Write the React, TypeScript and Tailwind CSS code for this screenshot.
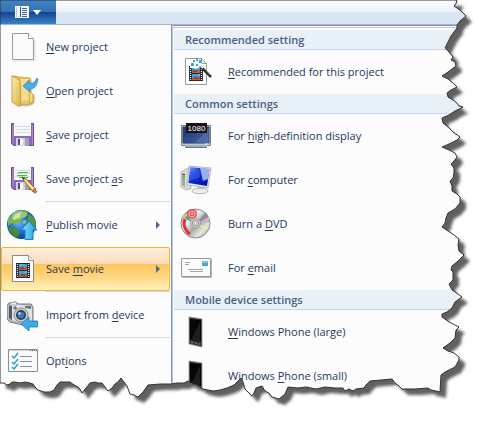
import React from "react";

const NewIcon = () => (
  <svg viewBox="0 0 32 32" className="h-8 w-8 shrink-0" aria-hidden="true">
    <path d="M6 30h22V9" fill="none" stroke="#dedede" />
    <path d="M5.500 2.500H21.500L26.500 8V28.500H5.500Z" fill="#fafafa" stroke="#999" />
    <path d="M21.500 2.500V7.500H26.500" fill="#fff" stroke="#999" />
  </svg>
);

const OpenIcon = () => (
  <svg viewBox="0 0 32 32" className="h-8 w-8 shrink-0" aria-hidden="true">
    <defs>
      <linearGradient id="folder" x1="0" y1="0" x2="1" y2="1">
        <stop offset="0" stopColor="#fbf0b4" />
        <stop offset="1" stopColor="#deb13f" />
      </linearGradient>
    </defs>
    <path d="M14 30L28 27L26 30L18 32Z" fill="#ccc" />
    <path d="M5 1L8 1L12 2L23 3L24 5V20L27 20V27L24 29L14 30Z" fill="#e7c45f" stroke="#bf9131" strokeWidth=".7" />
    <path d="M13 4H22V25L14 27Z" fill="#f3dc8b" />
    <path d="M5 1L13 5L14 31L11 31L5 27Z" fill="url(#folder)" stroke="#bf9131" strokeWidth=".8" />
    <path d="M22 18L24 17L26 20V27L23 28Z" fill="#f5dc72" stroke="#c79a35" strokeWidth=".7" />
    <path d="M16 11L22 5V8C26 9 28 7 30 3L31 4C30 11 27 14 23 14V17Z" fill="#49aee8" stroke="#1a83c5" strokeWidth=".7" />
  </svg>
);

const Floppy = () => (
  <>
    <path d="M4.500 4.500H26.500V26.500H7L4.500 24.500Z" fill="#8b68b8" stroke="#6b479b" />
    <path d="M6 6V24M25.500 6V26" stroke="#ac90cf" />
    <path d="M7 4H24V17H7Z" fill="#f8f8fa" />
    <path d="M8 7.500H23M8 10.500H23M8 13.500H23" stroke="#d3dce5" />
    <path d="M9 19H22V27H9Z" fill="#d5d2de" />
    <path d="M18 19H22V27H18Z" fill="#a69bb9" />
    <path d="M11 20H16V26H11Z" fill="#5f4391" />
    <path d="M13 20H16V26H13Z" fill="#fff" />
  </>
);

const SaveIcon = () => (
  <svg viewBox="0 0 32 32" className="h-8 w-8 shrink-0" aria-hidden="true">
    <Floppy />
  </svg>
);

const SaveAsIcon = () => (
  <svg viewBox="0 0 32 32" className="h-8 w-8 shrink-0" aria-hidden="true">
    <Floppy />
    <path d="M11 9.500H21M10 12.500H20M12 14.500H21" stroke="#46bd3b" />
    <path d="M15 14L19 16L29 26L26 29L17 18Z" fill="#f3cf67" stroke="#775c2c" strokeWidth=".8" />
    <path d="M18 17L27 27" stroke="#fff0aa" />
    <path d="M15 14L18 15.500L16.500 17Z" fill="#333" />
    <path d="M27 26L30 28.500L28 30.500L25.500 28Z" fill="#d36c66" stroke="#8e4540" strokeWidth=".6" />
  </svg>
);

const PublishIcon = () => (
  <svg viewBox="0 0 32 32" className="h-8 w-8 shrink-0" aria-hidden="true">
    <defs>
      <radialGradient id="ocean" cx=".4" cy=".45" r=".6">
        <stop offset="0" stopColor="#5eafff" />
        <stop offset=".6" stopColor="#1763c9" />
        <stop offset="1" stopColor="#0e3976" />
      </radialGradient>
      <linearGradient id="arrowUp" x1="0" y1="0" x2="1" y2="0">
        <stop offset="0" stopColor="#97defc" />
        <stop offset="1" stopColor="#1c9be0" />
      </linearGradient>
    </defs>
    <circle cx="14.500" cy="15.500" r="14.500" fill="url(#ocean)" />
    <path d="M8 3L15 1L21 3L20 7L15 9L13 13L9 16L5 14L1 17L1 10Z" fill="#77b84b" />
    <path d="M9 5L14 3L13 8L8 11L5 10Z" fill="#c5e08c" />
    <path d="M22 4L27 9L29 15L27 19L23 14L20 12Z" fill="#4f9940" />
    <path d="M1 19L6 18L13 23L11 28L7 28Z" fill="#458c35" />
    <path d="M15 14L17 11L20 12L18 15Z" fill="#8bc754" />
    <ellipse cx="12" cy="6" rx="8" ry="4" fill="#fff" opacity=".22" />
    <path d="M22 12L30 21H26V30.500H18V21H14Z" fill="url(#arrowUp)" stroke="#167fbd" />
  </svg>
);

const Film = () => (
  <>
    <path d="M9 10H23V25H9Z" fill="#222936" />
    <path d="M10.500 11V25M21.500 11V25" stroke="#dce7ee" strokeWidth="1.300" strokeDasharray="1 1" />
    <path d="M12 11H20V17H12ZM12 18H20V24H12Z" fill="#3aa4df" />
    <path d="M12 15L15 13L17 15L20 13V17H12ZM12 22L15 20L17 22L20 20V24H12Z" fill="#c55932" />
    <path d="M13 15H17M14 22H19" stroke="#1f447a" />
    <path d="M13 12H15M18 19H20" stroke="#f3ce59" />
  </>
);

const MovieIcon = () => (
  <svg viewBox="0 0 32 32" className="h-8 w-8 shrink-0" aria-hidden="true">
    <path d="M5.500 2.500H21.500L26.500 8V28.500H5.500Z" fill="#fff" stroke="#888" />
    <path d="M21.500 2.500V7.500H26.500" fill="#eee" stroke="#999" />
    <Film />
  </svg>
);

const ImportIcon = () => (
  <svg viewBox="0 0 32 32" className="h-8 w-8 shrink-0" aria-hidden="true">
    <path d="M0 7L2 4L9 3L11 5L24 5L26 8V24L20 27L3 23L0 20Z" fill="#b8bbc0" stroke="#74777c" />
    <path d="M5 5L23 7L25 9V23L20 25L5 21Z" fill="#e0e2e4" />
    <path d="M2 7L5 7V21L2 19Z" fill="#555c66" />
    <path d="M3 4L9 3L10 6H3Z" fill="#edf0f2" stroke="#888" strokeWidth=".6" />
    <path d="M18 7H24V10L18 9Z" fill="#68717c" />
    <path d="M8 7V11M6 9H10" stroke="#555" />
    <circle cx="14" cy="16" r="7" fill="#c8ccd0" stroke="#858b92" />
    <circle cx="14" cy="16" r="5" fill="#343d4f" />
    <circle cx="14" cy="16" r="3.300" fill="#347bc2" />
    <circle cx="12.500" cy="14.500" r="1.300" fill="#bde6ff" />
    <path d="M14 25L22 18V22H30.500V28H22V32Z" fill="#43a9e9" stroke="#157cbd" strokeWidth=".8" />
  </svg>
);

const OptionsIcon = () => (
  <svg viewBox="0 0 32 32" className="h-8 w-8 shrink-0" aria-hidden="true">
    <path d="M1.500 4.500H30.500V26.500H1.500Z" fill="#f8f9f9" stroke="#898e92" />
    <path d="M2 5.500H30" stroke="#cfd5da" />
    <path d="M23 5.500H30" stroke="#536f91" strokeDasharray="1 1" />
    <path d="M5 11L7 13L11 8M5 17L7 19L11 14M5 22L7 24L11 19" fill="none" stroke="#2d9bd0" strokeWidth="1.500" />
    <path d="M13 11.500H25M13 16.500H25M13 21.500H25" stroke="#8f8ca2" />
  </svg>
);

const RecommendedIcon = () => (
  <svg viewBox="0 0 32 32" className="h-8 w-8 shrink-0" aria-hidden="true">
    <path d="M5.500 2.500H21.500L26.500 8V28.500H5.500Z" fill="#fff" stroke="#999" />
    <path d="M21.500 2.500V7.500H26.500" fill="none" stroke="#999" />
    <Film />
    <path d="M10 9L19 4L23 9L18 13L10 12Z" fill="#fff" />
    <path d="M11 7h3v3h-3zM16 3h2v2h-2zM19 4h3v3h-3zM16 8h2v2h-2zM12 12h2v2h-2zM17 12h2v2h-2zM13 4h2v2h-2z" fill="#2da7e5" />
    <path d="M20 10L31 21" stroke="#303030" strokeWidth="2.500" />
    <path d="M20 9L23 12" stroke="#f3f3f3" strokeWidth="2" />
    <path d="M24 12L30 19" stroke="#8b8b8b" strokeWidth=".7" />
  </svg>
);

const DisplayIcon = () => (
  <svg viewBox="0 0 32 32" className="h-8 w-8 shrink-0" aria-hidden="true">
    <defs>
      <linearGradient id="screen" x1="0" y1="0" x2="1" y2="1">
        <stop offset="0" stopColor="#222f73" />
        <stop offset="1" stopColor="#4566aa" />
      </linearGradient>
    </defs>
    <path d="M1.500 5.500H30.500V25.500H1.500Z" fill="#bdc9ce" stroke="#718289" />
    <path d="M3 7H29V23H3Z" fill="url(#screen)" stroke="#2b3a60" />
    <path d="M15 23L29 8V23Z" fill="#6f85b8" opacity=".4" />
    <path d="M5 25H27V28H5Z" fill="#a3b0b4" />
    <path d="M5 27.500H27" stroke="#65777e" />
    <path d="M25 24H28" stroke="#eef" />
    <rect x="6" y="3" width="21" height="10" fill="#151515" />
    <text x="16.500" y="11" textAnchor="middle" fontFamily="Liberation Sans, sans-serif" fontSize="8" fill="#fff">1080</text>
  </svg>
);

const ComputerIcon = () => (
  <svg viewBox="0 0 32 32" className="h-8 w-8 shrink-0" aria-hidden="true">
    <defs>
      <linearGradient id="monitor" x1="0" y1="0" x2="1" y2="1">
        <stop offset="0" stopColor="#7dacff" />
        <stop offset=".3" stopColor="#1238df" />
        <stop offset="1" stopColor="#020c96" />
      </linearGradient>
    </defs>
    <path d="M1 8L8 4L11 6V25L6 26L1 23Z" fill="#d7d9d9" stroke="#a1a5a6" strokeWidth=".7" />
    <path d="M2 9L5 10V23L2 21Z" fill="#a5a8a9" />
    <path d="M2.500 10.500H5" stroke="#3f423f" />
    <path d="M3 13H5" stroke="#53cf20" strokeWidth="2" />
    <path d="M18 22L23 22L24 26H17Z" fill="#b8bec1" />
    <ellipse cx="20" cy="27" rx="8" ry="2.700" fill="#eceded" stroke="#b6b9ba" />
    <path d="M9 2L31 4L28 24L7 21Z" fill="#e8eaeb" stroke="#9da5ac" strokeWidth=".7" />
    <path d="M10 3L29.500 5L27 22L8.500 19Z" fill="url(#monitor)" />
    <path d="M20 4L29.500 5L28 15L23 17Z" fill="#d5eaff" opacity=".7" />
    <path d="M11 4L19 5L20 13L9 17Z" fill="#6086ef" opacity=".35" />
  </svg>
);

const DvdIcon = () => (
  <svg viewBox="0 0 32 32" className="h-8 w-8 shrink-0" aria-hidden="true">
    <defs>
      <linearGradient id="disc" x1="0" y1="0" x2="1" y2="1">
        <stop offset="0" stopColor="#8c8c8c" />
        <stop offset=".35" stopColor="#f1f1f1" />
        <stop offset=".55" stopColor="#aaa" />
        <stop offset=".75" stopColor="#e6e6e6" />
        <stop offset="1" stopColor="#858585" />
      </linearGradient>
    </defs>
    <circle cx="15.500" cy="15.500" r="14.500" fill="url(#disc)" stroke="#898989" />
    <path d="M16 15L26 4L30 13Z" fill="#696969" opacity=".45" />
    <path d="M18 15L29 9L30 12Z" fill="#ddb0df" />
    <path d="M18 17L29 18L26 22Z" fill="#eee7a2" />
    <path d="M14 14L2 8L4 6Z" fill="#b9df35" />
    <path d="M13 15L5 10L7 8Z" fill="#2ca2a7" />
    <path d="M5 11C2 18 7 24 10 26" fill="none" stroke="#e83038" strokeWidth="3" />
    <circle cx="12" cy="6" r="5" fill="#ea4045" opacity=".9" />
    <circle cx="12" cy="6" r="3" fill="none" stroke="#ffc2c2" />
    <circle cx="12" cy="6" r="1" fill="#fff" />
    <circle cx="15.500" cy="15" r="5" fill="#ccc" stroke="#888" strokeWidth=".6" />
    <circle cx="15.500" cy="15" r="3" fill="#eee" stroke="#888" />
    <circle cx="15.500" cy="15" r="1.300" fill="#fff" stroke="#777" strokeWidth=".5" />
  </svg>
);

const EmailIcon = () => (
  <svg viewBox="0 0 32 32" className="h-8 w-8 shrink-0" aria-hidden="true">
    <path d="M2 25.500H31.500V7" fill="none" stroke="#b9b9b9" />
    <path d="M1.500 6.500H30.500V24.500H1.500Z" fill="#fafafa" stroke="#969696" />
    <path d="M5 10.500H10M5 12.500H9M8 17.500H23M10 19.500H23" stroke="#a6a6a6" />
    <path d="M22 9H28V14H22Z" fill="#44a9c8" />
    <path d="M22 9H28V11H22Z" fill="#7dc6d9" />
  </svg>
);

const PhoneIcon = () => (
  <svg viewBox="0 0 32 32" className="h-8 w-8 shrink-0" aria-hidden="true">
    <path d="M9 1L22 3V31L9 28Z" fill="#3a3a3a" stroke="#888" strokeWidth=".7" />
    <path d="M10 3L21 4V26L10 24Z" fill="#060606" />
    <path d="M11 24L20 6V26Z" fill="#1e1e1e" />
    <path d="M11 26L13 26.500M15 27L17 27.500M19 28L20 28" stroke="#818181" />
  </svg>
);

interface Item {
  icon: () => React.JSX.Element;
  before: string;
  hotkey: string;
  after: string;
  arrow?: boolean;
  active?: boolean;
  separator?: boolean;
}

const menuItems: Item[] = [
  { icon: NewIcon, before: "", hotkey: "N", after: "ew project" },
  { icon: OpenIcon, before: "", hotkey: "O", after: "pen project" },
  { icon: SaveIcon, before: "", hotkey: "S", after: "ave project" },
  { icon: SaveAsIcon, before: "Save project ", hotkey: "a", after: "s", separator: true },
  { icon: PublishIcon, before: "", hotkey: "P", after: "ublish movie", arrow: true },
  { icon: MovieIcon, before: "Save ", hotkey: "m", after: "ovie", arrow: true, active: true, separator: true },
  { icon: ImportIcon, before: "Import from ", hotkey: "d", after: "evice", separator: true },
  { icon: OptionsIcon, before: "Opt", hotkey: "i", after: "ons" },
];

const groups: { title: string; items: Item[] }[] = [
  {
    title: "Recommended setting",
    items: [{ icon: RecommendedIcon, before: "", hotkey: "R", after: "ecommended for this project" }],
  },
  {
    title: "Common settings",
    items: [
      { icon: DisplayIcon, before: "For ", hotkey: "h", after: "igh-definition display" },
      { icon: ComputerIcon, before: "For ", hotkey: "c", after: "omputer" },
      { icon: DvdIcon, before: "Burn a ", hotkey: "D", after: "VD" },
      { icon: EmailIcon, before: "For ", hotkey: "e", after: "mail" },
    ],
  },
  {
    title: "Mobile device settings",
    items: [
      { icon: PhoneIcon, before: "", hotkey: "W", after: "indows Phone (large)" },
      { icon: PhoneIcon, before: "Windows ", hotkey: "P", after: "hone (small)" },
    ],
  },
];

const Label = ({ item }: { item: Item }) => (
  <span className="whitespace-pre">
    {item.before}
    <span className="underline underline-offset-2">{item.hotkey}</span>
    {item.after}
  </span>
);

const edge =
  "M0 0H457L456 4L454 6L457 8L461 11L466 16L460 21L457 25L457 28L451 36L448 42L445 48L449 52L453 57L451 60L455 62L456 66L448 72L442 76L448 79L453 83L457 87L451 90L447 93L448 97L453 100L457 103L459 106L463 107L455 111L449 115L442 118L443 123L449 128L453 132L460 137L457 140L449 144L442 147L449 150L455 153L457 157L454 161L451 164L454 168L454 173L453 178L450 181L452 186L452 191L457 194L460 197L460 203L455 209L448 213L446 218L445 223L442 227L448 231L454 235L459 239L458 245L459 251L464 255L458 261L452 266L451 270L453 272L453 280L449 284L452 290L458 294L462 297L455 302L452 308L447 312L442 314L442 317L449 322L459 327L456 330L455 338L450 343L443 348L448 351L454 353L459 357L459 360L455 367L445 372L441 375L440 392L436 391L431 390L428 388L415 389L402 389L398 385L395 383L392 379L381 380L370 381L366 385L364 388L356 389L353 391L349 389L345 391L343 388L335 388L325 387L316 389L306 387L298 388L288 387L285 394L279 399L272 397L269 393L265 391L262 386L256 388L254 393L252 396L248 392L245 389L243 382L241 378L238 381L234 385L227 388L220 390L213 391L203 389L197 385L193 384L188 381L184 383L177 383L171 384L160 384L148 385L143 392L138 397L134 395L130 394L127 386L124 382L121 378L118 382L115 384L112 388L108 391L105 387L102 383L98 383L95 382L90 383L86 388L82 393L80 389L78 387L74 385L70 382L60 382L57 385L54 390L50 392L44 392L38 390L35 387L33 384L30 383L25 382L20 383L14 382L12 382L10 384L7 385L4 383H0Z";

const TornEdge = () => (
  <svg
    viewBox="0 0 487 422"
    preserveAspectRatio="none"
    className="pointer-events-none absolute inset-0 h-full w-full"
    aria-hidden="true"
  >
    <defs>
      <clipPath id="outside">
        <path clipRule="evenodd" d={`M0 0H487V422H0Z ${edge}`} />
      </clipPath>
      <filter id="soften">
        <feGaussianBlur stdDeviation="1.500" />
      </filter>
    </defs>
    <g clipPath="url(#outside)">
      <path d="M0 0H487V422H0Z" fill="#fff" />
      <path d={edge} transform="translate(6 6)" fill="#606060" filter="url(#soften)" />
    </g>
    <path d={edge} fill="none" stroke="#333" strokeWidth="1" />
  </svg>
);

const App = () => {
  return (
    <div className="relative overflow-hidden bg-[#fcfcfc] pb-6 font-['Open_Sans','Noto_Sans',sans-serif] text-[11px] text-[#1e395b]">
      {/* Title strip */}
      <header className="flex h-[25px] border-b border-[#a6b3cb] bg-[linear-gradient(#ffffff_0px,#e9f1fb_12px,#dbe6f4_12px,#dbe6f4_24px)]">
        <button
          type="button"
          aria-label="File menu"
          className="flex w-14 items-center gap-1 bg-[linear-gradient(#4382c4_0px,#3270b5_12px,#15408b_12px,#3684c9_24px)] pl-[15px]"
        >
          <svg viewBox="0 0 14 12" className="h-3 w-[14px]" aria-hidden="true">
            <path d="M0 0H14V12H0Z" fill="#f6f8fb" />
            <path d="M1.500 1V11" stroke="#bac8db" />
            <path d="M5.500 1V11" stroke="#295690" />
            <path d="M7 2.500H12M7 4.500H12M7 6.500H12M7 8.500H12M7 10.500H12" stroke="#36669e" />
          </svg>
          <svg viewBox="0 0 8 5" className="h-[5px] w-2" aria-hidden="true">
            <path d="M0 0H8L4 5Z" fill="#fff" />
          </svg>
        </button>
      </header>

      <div className="flex">
        {/* Commands */}
        <nav className="w-[170px] shrink-0 pl-px">
          {menuItems.map((item) => (
            <React.Fragment key={item.after}>
              <button
                type="button"
                className={
                  item.active
                    ? "flex h-11 w-full items-center gap-[7px] rounded-xs border border-[#f6b420] bg-[linear-gradient(#fdeee0_0%,#fddcb9_38%,#fdc65c_39%,#fed37b_65%,#fff0bd_100%)] pr-[9px] pl-[5px] text-left shadow-[inset_0_0_2px_#fff2cc]"
                    : "flex h-11 w-full items-center gap-[7px] pr-[10px] pl-[6px] text-left"
                }
              >
                <item.icon />
                <Label item={item} />
                {item.arrow && (
                  <svg viewBox="0 0 4 8" className="ml-auto h-2 w-1" aria-hidden="true">
                    <path d="M0 0L4 4L0 8Z" fill="#53698c" />
                  </svg>
                )}
              </button>
              {item.separator && <div className="ml-11 h-[2px] border-t border-[#cfdbeb]" />}
            </React.Fragment>
          ))}
        </nav>

        {/* Save movie submenu */}
        <main className="ml-px min-w-0 flex-1 border-t border-l border-[#8395b2]">
          <div className="mt-px border-t border-l border-[#b9c6dc] pt-[2px] pl-px">
            {groups.map((group) => (
              <section key={group.title}>
                <h2 className="h-5 border-b border-[#c8d6ea] bg-[#e9f1f8] pl-[11px] text-[11px] leading-5 font-semibold text-[#48607f]">
                  {group.title}
                </h2>
                {group.items.map((item) => (
                  <button
                    key={item.before + item.after}
                    type="button"
                    className="flex h-11 w-full items-center gap-4 pl-[6px] text-left"
                  >
                    <item.icon />
                    <Label item={item} />
                  </button>
                ))}
              </section>
            ))}
          </div>
        </main>
      </div>
      <TornEdge />
    </div>
  );
};

export default App;
